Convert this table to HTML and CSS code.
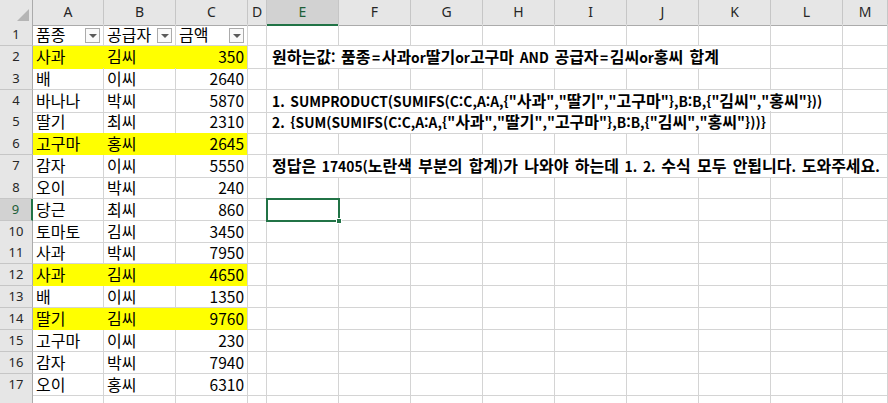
FILE: index.html
```html
<!DOCTYPE html>
<html lang="ko">
<head>
<meta charset="utf-8">
<title>Sheet</title>
<link rel="stylesheet" href="styles.css">
</head>
<body>
<div class="sheet">
  <div class="r hdr">
    <span class="corner"><svg width="33" height="24" viewBox="0 0 33 24"><polygon points="29,9 29,21 17,21" fill="#b5b5b5"/></svg></span>
    <span>A</span><span>B</span><span>C</span><span>D</span><span class="sel">E</span><span>F</span><span>G</span><span>H</span><span>I</span><span>J</span><span>K</span><span>L</span><span>M</span>
  </div>
  <div class="r">
    <span class="rh">1</span>
    <span class="flt">품종<b class="fb"></b></span><span class="flt">공급자<b class="fb"></b></span><span class="flt">금액<b class="fb"></b></span>
    <span></span><span></span><span></span><span></span><span></span><span></span><span></span><span></span><span></span><span></span>
  </div>
  <div class="r">
    <span class="rh">2</span>
    <span class="y">사과</span><span class="y">김씨</span><span class="y num">350</span>
    <span></span><span class="txt s7"><span class="k">원하는값</span>: <span class="k">품종</span><span class="eq">=</span><span class="k">사과</span>or<span class="k">딸기</span>or<span class="k">고구마</span> AND <span class="k">공급자</span><span class="eq">=</span><span class="k">김씨</span>or<span class="k">홍씨 합계</span></span><span></span><span></span>
  </div>
  <div class="r">
    <span class="rh">3</span>
    <span>배</span><span>이씨</span><span class="num">2640</span>
    <span></span><span></span><span></span><span></span><span></span><span></span><span></span><span></span><span></span><span></span>
  </div>
  <div class="r">
    <span class="rh">4</span>
    <span>바나나</span><span>박씨</span><span class="num">5870</span>
    <span></span><span class="txt s8">1. SUMPRODUCT(SUMIFS(C:C,A:A,{"<span class="k">사과</span>","<span class="k">딸기</span>","<span class="k">고구마</span>"},B:B,{"<span class="k">김씨</span>","<span class="k">홍씨</span>"}))</span><span></span>
  </div>
  <div class="r">
    <span class="rh">5</span>
    <span>딸기</span><span>최씨</span><span class="num">2310</span>
    <span></span><span class="txt s7">2. {SUM(SUMIFS(C:C,A:A,{"<span class="k">사과</span>","<span class="k">딸기</span>","<span class="k">고구마</span>"},B:B,{"<span class="k">김씨</span>","<span class="k">홍씨</span>"}))}</span><span></span><span></span>
  </div>
  <div class="r">
    <span class="rh">6</span>
    <span class="y">고구마</span><span class="y">홍씨</span><span class="y num">2645</span>
    <span></span><span></span><span></span><span></span><span></span><span></span><span></span><span></span><span></span><span></span>
  </div>
  <div class="r">
    <span class="rh">7</span>
    <span>감자</span><span>이씨</span><span class="num">5550</span>
    <span></span><span class="txt s9"><span class="k">정답은</span> 17405(<span class="k">노란색 부분의 합계</span>)<span class="k">가 나와야 하는데</span> 1. 2. <span class="k">수식 모두 안됩니다</span>. <span class="k">도와주세요</span>.</span>
  </div>
  <div class="r">
    <span class="rh">8</span>
    <span>오이</span><span>박씨</span><span class="num">240</span>
    <span></span><span></span><span></span><span></span><span></span><span></span><span></span><span></span><span></span><span></span>
  </div>
  <div class="r">
    <span class="rh rsel">9</span>
    <span>당근</span><span>최씨</span><span class="num">860</span>
    <span></span><span class="active"><i class="handle"></i></span><span></span><span></span><span></span><span></span><span></span><span></span><span></span><span></span>
  </div>
  <div class="r">
    <span class="rh">10</span>
    <span>토마토</span><span>김씨</span><span class="num">3450</span>
    <span></span><span></span><span></span><span></span><span></span><span></span><span></span><span></span><span></span><span></span>
  </div>
  <div class="r">
    <span class="rh">11</span>
    <span>사과</span><span>박씨</span><span class="num">7950</span>
    <span></span><span></span><span></span><span></span><span></span><span></span><span></span><span></span><span></span><span></span>
  </div>
  <div class="r">
    <span class="rh">12</span>
    <span class="y">사과</span><span class="y">김씨</span><span class="y num">4650</span>
    <span></span><span></span><span></span><span></span><span></span><span></span><span></span><span></span><span></span><span></span>
  </div>
  <div class="r">
    <span class="rh">13</span>
    <span>배</span><span>이씨</span><span class="num">1350</span>
    <span></span><span></span><span></span><span></span><span></span><span></span><span></span><span></span><span></span><span></span>
  </div>
  <div class="r">
    <span class="rh">14</span>
    <span class="y">딸기</span><span class="y">김씨</span><span class="y num">9760</span>
    <span></span><span></span><span></span><span></span><span></span><span></span><span></span><span></span><span></span><span></span>
  </div>
  <div class="r">
    <span class="rh">15</span>
    <span>고구마</span><span>이씨</span><span class="num">230</span>
    <span></span><span></span><span></span><span></span><span></span><span></span><span></span><span></span><span></span><span></span>
  </div>
  <div class="r">
    <span class="rh">16</span>
    <span>감자</span><span>박씨</span><span class="num">7940</span>
    <span></span><span></span><span></span><span></span><span></span><span></span><span></span><span></span><span></span><span></span>
  </div>
  <div class="r">
    <span class="rh">17</span>
    <span>오이</span><span>홍씨</span><span class="num">6310</span>
    <span></span><span></span><span></span><span></span><span></span><span></span><span></span><span></span><span></span><span></span>
  </div>
  <div class="r">
    <span class="rh"></span>
    <span></span><span></span><span></span>
    <span></span><span></span><span></span><span></span><span></span><span></span><span></span><span></span><span></span><span></span>
  </div>
</div>
</body>
</html>
```

FILE: styles.css
```css
* { box-sizing: border-box; }
html, body { margin: 0; padding: 0; background: #fff; overflow: hidden; }
body { width: 888px; height: 403px; }

.sheet {
  font-family: "Noto Sans CJK KR", "Noto Sans", sans-serif;
  font-size: 16px;
  color: #000;
}

.r {
  display: grid;
  grid-template-columns: 33px 71px 72px 72px 19px 72px 72px 72px 72px 72px 72px 72px 72px 1fr;
  height: 21.85px;
}

.r > span {
  position: relative;
  border-right: 1px solid #d4d4d4;
  border-bottom: 1px solid #d4d4d4;
  padding: 0 3px;
  line-height: 21px;
  white-space: nowrap;
  overflow: visible;
}

.hdr { height: 24px; }
.hdr > span {
  background: #e6e6e6;
  border-right: 1px solid #c6c6c6;
  border-bottom: 1px solid #ababab;
  font-family: "Noto Sans", sans-serif;
  font-size: 14px;
  color: #262626;
  text-align: center;
  line-height: 24px;
  padding: 0;
}
.hdr > span.corner { border-right: 1px solid #ababab; line-height: 0; }
.hdr > span.sel {
  background: #d2d2d2;
  color: #1d5e38;
  border-bottom: 2px solid #217346;
}

.r > span.rh {
  background: #e6e6e6;
  border-right: 1px solid #ababab;
  border-bottom: 1px solid #c6c6c6;
  font-family: "Noto Sans", sans-serif;
  font-size: 13px;
  color: #262626;
  text-align: center;
  line-height: 21px;
  padding: 0;
}
.r > span.rsel {
  background: #d2d2d2;
  color: #1d5e38;
  border-right: 2px solid #217346;
}

.r > span.y { background: #ffff00; border-right-color: #ffff00; border-bottom-color: #ffff00; }
.r > span.y.num { border-right-color: #d4d4d4; }
.r > span.num { text-align: right; font-size: 15.5px; }

.fb {
  position: absolute;
  right: 3px;
  top: 4px;
  width: 15px;
  height: 15px;
  border: 1px solid #ababab;
  background: #fafafa;
}
.fb::after {
  content: "";
  position: absolute;
  left: 3px;
  top: 5px;
  border-left: 4px solid transparent;
  border-right: 4px solid transparent;
  border-top: 4px solid #5a5a5a;
}

.r > span.txt {
  font-weight: bold;
  font-size: 13.8px;
  word-spacing: 1.8px;
  padding-left: 5px;
}
.txt .k { font-size: 16px; }
.txt .eq { padding: 0 1.5px; }
.s7 { grid-column: span 7; }
.s8 { grid-column: span 8; }
.s9 { grid-column: span 9; }

.r > span.active {
  outline: 2px solid #217346;
  outline-offset: -1px;
  z-index: 2;
}
.handle {
  position: absolute;
  right: -4px;
  bottom: -4px;
  width: 6px;
  height: 6px;
  background: #217346;
  border: 1px solid #fff;
}
```
